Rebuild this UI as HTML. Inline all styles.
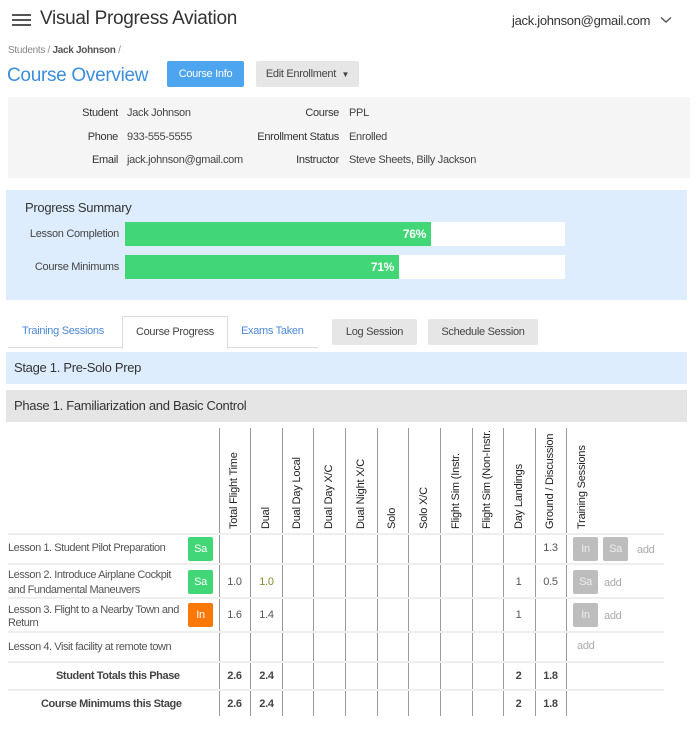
<!DOCTYPE html>
<html><head><meta charset="utf-8"><style>
*{margin:0;padding:0;box-sizing:border-box}
body{width:700px;height:730px;background:#fff;font-family:"Liberation Sans",sans-serif;color:#444;position:relative;overflow:hidden;letter-spacing:-0.3px}
.a{position:absolute;white-space:nowrap}
.lbl{font-size:11px;color:#333;text-align:right}
.val{font-size:11px;color:#444}
.btn{position:absolute;font-size:11px;text-align:center;border-radius:2px}
.vl{position:absolute;width:1px;background:#999;top:428px;height:288px}
.hl{position:absolute;left:8px;width:656px;height:2px;background:#eee}
.vt{position:absolute;font-size:11px;color:#222;transform:rotate(-90deg);transform-origin:left top;white-space:nowrap;letter-spacing:-0.2px}
.bd{position:absolute;width:25px;height:24px;color:#fff;font-size:11px;text-align:center;line-height:24px;border-radius:2px}
.g{background:#41d676}.o{background:#f97808}.gr{background:#bdbdbd;color:#eee}
.c{position:absolute;font-size:11px;color:#555;width:31px;text-align:center}
.add{position:absolute;font-size:11px;color:#aaa}
.les{font-size:11px;color:#555;letter-spacing:-0.45px}
</style></head><body>
<div class="a" style="left:12px;top:14px;width:19px;height:2px;background:#555"></div>
<div class="a" style="left:12px;top:19px;width:19px;height:2px;background:#555"></div>
<div class="a" style="left:12px;top:24px;width:19px;height:2px;background:#555"></div>
<div class="a" style="left:40px;top:8px;font-size:19px;color:#333">Visual Progress Aviation</div>
<div class="a" style="left:512px;top:13px;font-size:13px;color:#333">jack.johnson@gmail.com</div>
<svg class="a" style="left:660px;top:16px" width="12" height="8"><path d="M1 1.5 L6 6 L11 1.5" stroke="#555" stroke-width="1.4" fill="none"/></svg>
<div class="a" style="left:8px;top:45px;font-size:10px;color:#888">Students / <b style="color:#555">Jack Johnson</b> /</div>
<div class="a" style="left:7px;top:65px;font-size:19px;color:#3b8ede">Course Overview</div>
<div class="btn" style="left:167px;top:61px;width:77px;height:26px;background:#4da4ef;color:#fff;line-height:26px">Course Info</div>
<div class="btn" style="left:256px;top:61px;width:103px;height:26px;background:#e6e6e6;color:#444;line-height:26px">Edit Enrollment &nbsp;<span style="font-size:8px">▼</span></div>
<div class="a" style="left:8px;top:97px;width:682px;height:81px;background:#f5f5f5"></div>
<div class="a lbl" style="left:40px;top:107px;width:78px">Student</div><div class="a val" style="left:127px;top:107px">Jack Johnson</div>
<div class="a lbl" style="left:40px;top:131px;width:78px">Phone</div><div class="a val" style="left:127px;top:131px">933-555-5555</div>
<div class="a lbl" style="left:40px;top:154px;width:78px">Email</div><div class="a val" style="left:127px;top:154px">jack.johnson@gmail.com</div>
<div class="a lbl" style="left:220px;top:107px;width:119px">Course</div><div class="a val" style="left:349px;top:107px">PPL</div>
<div class="a lbl" style="left:220px;top:131px;width:119px">Enrollment Status</div><div class="a val" style="left:349px;top:131px">Enrolled</div>
<div class="a lbl" style="left:220px;top:154px;width:119px">Instructor</div><div class="a val" style="left:349px;top:154px">Steve Sheets, Billy Jackson</div>
<div class="a" style="left:6px;top:190px;width:681px;height:110px;background:#deedfd"></div>
<div class="a" style="left:25px;top:200px;font-size:13px;color:#333">Progress Summary</div>
<div class="a lbl" style="left:20px;top:228px;width:99px;color:#444">Lesson Completion</div>
<div class="a lbl" style="left:20px;top:261px;width:99px;color:#444">Course Minimums</div>
<div class="a" style="left:125px;top:222px;width:440px;height:24px;background:#fff"></div>
<div class="a" style="left:125px;top:222px;width:306px;height:24px;background:#41d676;color:#fff;font-size:12px;font-weight:bold;text-align:right;padding-right:5px;line-height:24px">76%</div>
<div class="a" style="left:125px;top:255px;width:440px;height:24px;background:#fff"></div>
<div class="a" style="left:125px;top:255px;width:274px;height:24px;background:#41d676;color:#fff;font-size:12px;font-weight:bold;text-align:right;padding-right:5px;line-height:24px">71%</div>
<div class="a" style="left:8px;top:347px;width:310px;height:1px;background:#ddd"></div>
<div class="a" style="left:22px;top:325px;font-size:11px;color:#4a88d8">Training Sessions</div>
<div class="a" style="left:122px;top:316px;width:106px;height:33px;background:#fff;border:1px solid #ddd;border-bottom:none;font-size:11px;color:#444;text-align:center;line-height:30px">Course Progress</div>
<div class="a" style="left:241px;top:325px;font-size:11px;color:#4a88d8">Exams Taken</div>
<div class="btn" style="left:332px;top:319px;width:85px;height:26px;background:#e6e6e6;line-height:26px">Log Session</div>
<div class="btn" style="left:428px;top:319px;width:110px;height:26px;background:#e6e6e6;line-height:26px">Schedule Session</div>
<div class="a" style="left:6px;top:352px;width:681px;height:32px;background:#deedfd;font-size:13px;color:#333;padding-left:8px;line-height:32px">Stage 1. Pre-Solo Prep</div>
<div class="a" style="left:6px;top:390px;width:681px;height:32px;background:#e5e5e5;font-size:13px;color:#333;padding-left:8px;line-height:32px">Phase 1. Familiarization and Basic Control</div>

<div class="vl" style="left:219px"></div><div class="vl" style="left:250px"></div><div class="vl" style="left:282px"></div><div class="vl" style="left:313px"></div><div class="vl" style="left:345px"></div><div class="vl" style="left:377px"></div><div class="vl" style="left:408px"></div><div class="vl" style="left:440px"></div><div class="vl" style="left:472px"></div><div class="vl" style="left:503px"></div><div class="vl" style="left:535px"></div><div class="vl" style="left:566px"></div>

<div class="vt" style="left:228px;top:529px">Total Flight Time</div>
<div class="vt" style="left:260px;top:529px">Dual</div>
<div class="vt" style="left:291px;top:529px">Dual Day Local</div>
<div class="vt" style="left:323px;top:529px">Dual Day X/C</div>
<div class="vt" style="left:355px;top:529px">Dual Night X/C</div>
<div class="vt" style="left:386px;top:529px">Solo</div>
<div class="vt" style="left:418px;top:529px">Solo X/C</div>
<div class="vt" style="left:450px;top:529px">Flight Sim (Instr.</div>
<div class="vt" style="left:481px;top:529px">Flight Sim (Non-Instr.</div>
<div class="vt" style="left:513px;top:529px">Day Landings</div>
<div class="vt" style="left:544px;top:529px">Ground / Discussion</div>
<div class="vt" style="left:576px;top:529px">Training Sessions</div>

<div class="hl" style="top:533px"></div><div class="hl" style="top:563px"></div><div class="hl" style="top:597px"></div><div class="hl" style="top:631px"></div><div class="hl" style="top:661px"></div><div class="hl" style="top:689px"></div>

<div class="a les" style="left:8px;top:542px">Lesson 1. Student Pilot Preparation</div>
<div class="a les" style="left:8px;top:568px;line-height:15px">Lesson 2. Introduce Airplane Cockpit<br>and Fundamental Maneuvers</div>
<div class="a les" style="left:8px;top:604px;line-height:13px">Lesson 3. Flight to a Nearby Town and<br>Return</div>
<div class="a les" style="left:8px;top:641px">Lesson 4. Visit facility at remote town</div>
<div class="a val" style="left:56px;top:670px;font-weight:bold;color:#444;letter-spacing:-0.4px">Student Totals this Phase</div>
<div class="a val" style="left:41px;top:698px;font-weight:bold;color:#444;letter-spacing:-0.4px">Course Minimums this Stage</div>

<div class="bd g" style="left:188px;top:537px">Sa</div>
<div class="bd g" style="left:188px;top:570px">Sa</div>
<div class="bd o" style="left:188px;top:603px">In</div>

<div class="c" style="left:535px;top:542px">1.3</div>
<div class="c" style="left:219px;top:576px">1.0</div><div class="c" style="left:251px;top:576px;color:#8a8a30">1.0</div>
<div class="c" style="left:503px;top:576px">1</div><div class="c" style="left:535px;top:576px">0.5</div>
<div class="c" style="left:219px;top:609px">1.6</div><div class="c" style="left:251px;top:609px">1.4</div><div class="c" style="left:503px;top:609px">1</div>
<div class="c" style="left:219px;top:670px;font-weight:bold;color:#444">2.6</div><div class="c" style="left:251px;top:670px;font-weight:bold;color:#444">2.4</div><div class="c" style="left:503px;top:670px;font-weight:bold;color:#444">2</div><div class="c" style="left:535px;top:670px;font-weight:bold;color:#444">1.8</div>
<div class="c" style="left:219px;top:698px;font-weight:bold;color:#444">2.6</div><div class="c" style="left:251px;top:698px;font-weight:bold;color:#444">2.4</div><div class="c" style="left:503px;top:698px;font-weight:bold;color:#444">2</div><div class="c" style="left:535px;top:698px;font-weight:bold;color:#444">1.8</div>

<div class="bd gr" style="left:573px;top:537px">In</div><div class="bd gr" style="left:603px;top:537px">Sa</div><div class="add" style="left:637px;top:544px">add</div>
<div class="bd gr" style="left:573px;top:570px">Sa</div><div class="add" style="left:604px;top:577px">add</div>
<div class="bd gr" style="left:573px;top:603px">In</div><div class="add" style="left:604px;top:610px">add</div>
<div class="add" style="left:577px;top:640px">add</div>
</body></html>
